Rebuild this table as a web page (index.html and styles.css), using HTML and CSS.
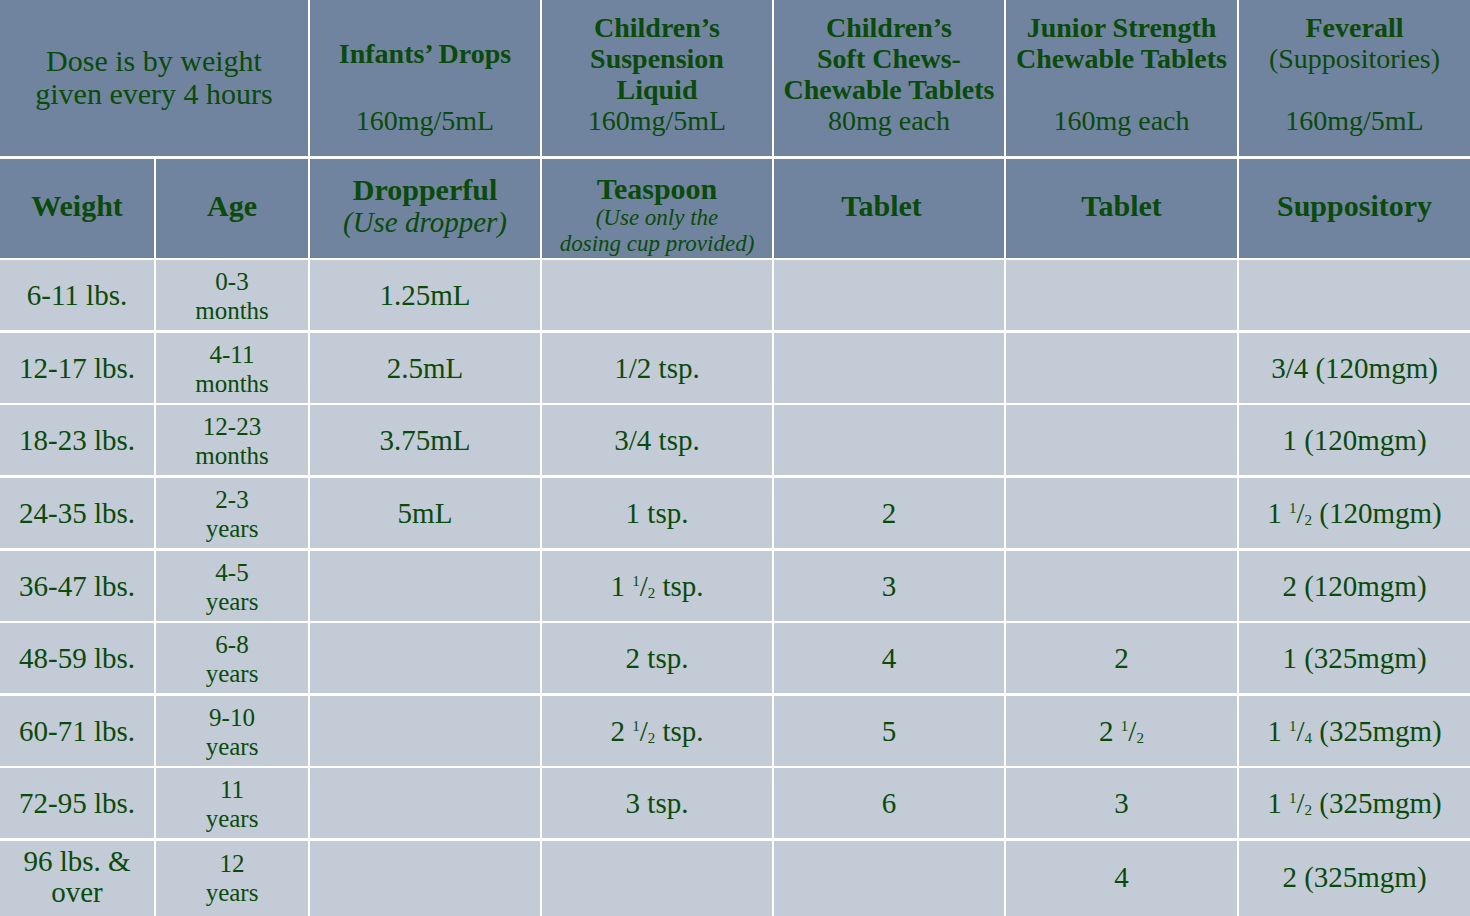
FILE: index.html
```html
<!DOCTYPE html>
<html lang="en">
<head>
<meta charset="utf-8">
<title>Acetaminophen Dosing Chart</title>
<link rel="stylesheet" href="styles.css">
</head>
<body>
<div class="chart">
  <div class="cell head intro span2">
    <div>Dose is by weight</div>
    <div>given every 4 hours</div>
  </div>
  <div class="cell head product">
    <div class="b drops">Infants’ Drops</div>
    <div class="drops-strength">160mg/5mL</div>
  </div>
  <div class="cell head product">
    <div class="b">Children’s</div>
    <div class="b">Suspension</div>
    <div class="b">Liquid</div>
    <div>160mg/5mL</div>
  </div>
  <div class="cell head product">
    <div class="b">Children’s</div>
    <div class="b">Soft Chews-</div>
    <div class="b">Chewable Tablets</div>
    <div>80mg each</div>
  </div>
  <div class="cell head product">
    <div class="b">Junior Strength</div>
    <div class="b">Chewable Tablets</div>
    <div>&nbsp;</div>
    <div>160mg each</div>
  </div>
  <div class="cell head product">
    <div class="b">Feverall</div>
    <div>(Suppositories)</div>
    <div>&nbsp;</div>
    <div>160mg/5mL</div>
  </div>

  <div class="cell head unit"><span class="b">Weight</span></div>
  <div class="cell head unit"><span class="b">Age</span></div>
  <div class="cell head unit">
    <div class="b">Dropperful</div>
    <div class="i">(Use dropper)</div>
  </div>
  <div class="cell head unit top">
    <div class="b">Teaspoon</div>
    <div class="i small">(Use only the</div>
    <div class="i small">dosing cup provided)</div>
  </div>
  <div class="cell head unit"><span class="b">Tablet&nbsp;&nbsp;</span></div>
  <div class="cell head unit"><span class="b">Tablet</span></div>
  <div class="cell head unit"><span class="b">Suppository</span></div>

  <div class="cell">6-11 lbs.</div>
  <div class="cell age"><div>0-3</div><div>months</div></div>
  <div class="cell">1.25mL</div>
  <div class="cell"></div>
  <div class="cell"></div>
  <div class="cell"></div>
  <div class="cell"></div>

  <div class="cell">12-17 lbs.</div>
  <div class="cell age"><div>4-11</div><div>months</div></div>
  <div class="cell">2.5mL</div>
  <div class="cell">1/2 tsp.</div>
  <div class="cell"></div>
  <div class="cell"></div>
  <div class="cell">3/4 (120mgm)</div>

  <div class="cell">18-23 lbs.</div>
  <div class="cell age"><div>12-23</div><div>months</div></div>
  <div class="cell">3.75mL</div>
  <div class="cell">3/4 tsp.</div>
  <div class="cell"></div>
  <div class="cell"></div>
  <div class="cell">1 (120mgm)</div>

  <div class="cell">24-35 lbs.</div>
  <div class="cell age"><div>2-3</div><div>years</div></div>
  <div class="cell">5mL</div>
  <div class="cell">1 tsp.</div>
  <div class="cell">2</div>
  <div class="cell"></div>
  <div class="cell"><span>1 <span class="fr"><sup>1</sup>/<sub>2</sub></span> (120mgm)</span></div>

  <div class="cell">36-47 lbs.</div>
  <div class="cell age"><div>4-5</div><div>years</div></div>
  <div class="cell"></div>
  <div class="cell"><span>1 <span class="fr"><sup>1</sup>/<sub>2</sub></span> tsp.</span></div>
  <div class="cell">3</div>
  <div class="cell"></div>
  <div class="cell">2 (120mgm)</div>

  <div class="cell">48-59 lbs.</div>
  <div class="cell age"><div>6-8</div><div>years</div></div>
  <div class="cell"></div>
  <div class="cell">2 tsp.</div>
  <div class="cell">4</div>
  <div class="cell">2</div>
  <div class="cell">1 (325mgm)</div>

  <div class="cell">60-71 lbs.</div>
  <div class="cell age"><div>9-10</div><div>years</div></div>
  <div class="cell"></div>
  <div class="cell"><span>2 <span class="fr"><sup>1</sup>/<sub>2</sub></span> tsp.</span></div>
  <div class="cell">5</div>
  <div class="cell"><span>2 <span class="fr"><sup>1</sup>/<sub>2</sub></span></span></div>
  <div class="cell"><span>1 <span class="fr"><sup>1</sup>/<sub>4</sub></span> (325mgm)</span></div>

  <div class="cell">72-95 lbs.</div>
  <div class="cell age"><div>11</div><div>years</div></div>
  <div class="cell"></div>
  <div class="cell">3 tsp.</div>
  <div class="cell">6</div>
  <div class="cell">3</div>
  <div class="cell"><span>1 <span class="fr"><sup>1</sup>/<sub>2</sub></span> (325mgm)</span></div>

  <div class="cell last weight2"><div>96 lbs. &amp;</div><div>over</div></div>
  <div class="cell last age"><div>12</div><div>years</div></div>
  <div class="cell last"></div>
  <div class="cell last"></div>
  <div class="cell last"></div>
  <div class="cell last">4</div>
  <div class="cell last">2 (325mgm)</div>
</div>
</body>
</html>
```

FILE: styles.css
```css
html, body {
  margin: 0;
  padding: 0;
  background: #ffffff;
}

body {
  font-family: "Liberation Serif", "Times New Roman", serif;
  color: #0a4a0a;
  overflow: hidden;
}

.chart {
  display: grid;
  grid-template-columns: 154px 152px 230px 230px 230px 231px 231px;
  grid-template-rows: 156px 99px repeat(8, 70px) 76px;
  column-gap: 2px;
  row-gap: 2.6px;
  width: 1470px;
}

.cell {
  background: #c3cbd7;
  display: flex;
  flex-direction: column;
  align-items: center;
  justify-content: center;
  text-align: center;
  font-size: 29px;
  line-height: 32px;
  overflow: hidden;
  white-space: nowrap;
}

.cell.last {
  padding-bottom: 3px;
}

.head {
  background: #71849f;
}

.span2 {
  grid-column: span 2;
}

.intro {
  font-size: 30px;
  line-height: 33px;
  padding-bottom: 2px;
}

.product {
  justify-content: flex-start;
  padding-top: 12px;
  font-size: 28px;
  line-height: 31px;
}

.product .b {
  font-size: 28px;
}

.drops {
  margin-top: 26px;
}

.drops-strength {
  margin-top: 36px;
}

.b {
  font-weight: bold;
}

.i {
  font-style: italic;
}

.unit {
  font-size: 30px;
  line-height: 32px;
  padding-bottom: 4px;
}

.unit .i {
  font-size: 29px;
}

.unit.top {
  justify-content: flex-start;
  padding-top: 14px;
  padding-bottom: 0;
}

.unit .small {
  font-size: 23px;
  line-height: 26px;
}

.age {
  font-size: 25px;
  line-height: 29px;
  padding-top: 2px;
}

.weight2 {
  line-height: 31px;
}

.fr {
  font-size: 29px;
}

.fr sup,
.fr sub {
  font-size: 15px;
  line-height: 0;
  position: relative;
}

.fr sup {
  vertical-align: baseline;
  top: -10px;
}

.fr sub {
  vertical-align: baseline;
  top: 2px;
}
```
